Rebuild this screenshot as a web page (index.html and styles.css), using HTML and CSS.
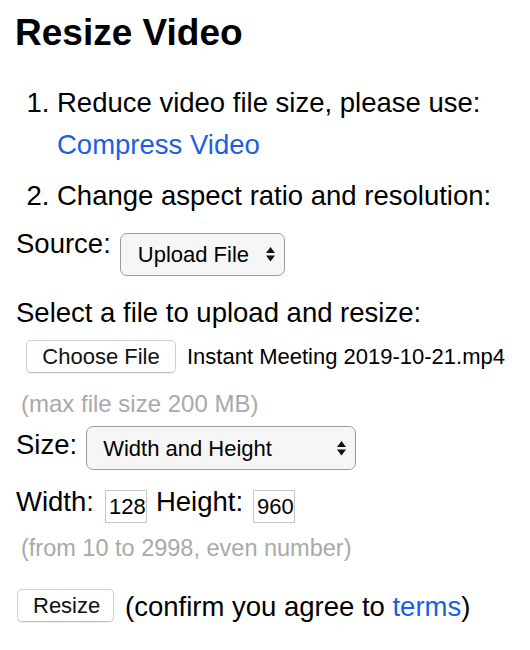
FILE: index.html
```html
<!DOCTYPE html>
<html lang="en">
<head>
<meta charset="utf-8">
<title>Resize Video</title>
<link rel="stylesheet" href="styles.css">
</head>
<body>
<h1 class="title">Resize Video</h1>
<ol class="steps">
  <li class="step">Reduce video file size, please use:<br><a class="link" href="#">Compress Video</a></li>
  <li class="step step-two">Change aspect ratio and resolution:</li>
</ol>
<div class="row row-source">
  <span class="label label-source">Source:</span>
  <div class="select select-source">
    <span class="select-text">Upload File</span>
    <svg class="arrows" width="9" height="15" viewBox="0 0 9 15"><path d="M4.5 0 L9 6 L0 6 Z M0 8.5 L9 8.5 L4.5 14.5 Z" fill="#111"/></svg>
  </div>
</div>
<p class="line select-file">Select a file to upload and resize:</p>
<div class="row row-file">
  <button class="btn btn-choose" type="button">Choose File</button>
  <span class="filename">Instant Meeting 2019-10-21.mp4</span>
</div>
<p class="hint hint-max">(max file size 200 MB)</p>
<div class="row row-size">
  <span class="label label-size">Size:</span>
  <div class="select select-size">
    <span class="select-text">Width and Height</span>
    <svg class="arrows" width="9" height="15" viewBox="0 0 9 15"><path d="M4.5 0 L9 6 L0 6 Z M0 8.5 L9 8.5 L4.5 14.5 Z" fill="#111"/></svg>
  </div>
</div>
<div class="row row-dims">
  <span class="label">Width:</span>
  <input class="num num-w" type="text" value="1280">
  <span class="label label-h">Height:</span>
  <input class="num num-h" type="text" value="960">
</div>
<p class="hint hint-range">(from 10 to 2998, even number)</p>
<div class="row row-submit">
  <button class="btn btn-resize" type="button">Resize</button>
  <span class="confirm">(confirm you agree to <a class="link" href="#">terms</a>)</span>
</div>
</body>
</html>
```
FILE: styles.css
```css
html, body {
  margin: 0;
  background: #fff;
}
body {
  padding: 11px 0 0 16px;
  font-family: "Liberation Sans", Arial, Helvetica, sans-serif;
  font-size: 27.5px;
  line-height: 34px;
  color: #000;
}
.title {
  margin: 0 0 0 -1px;
  font-size: 37px;
  line-height: 44px;
  font-weight: bold;
}
.steps {
  margin: 26.5px 0 0 0;
  padding-left: 41px;
}
.step {
  line-height: 42px;
}
.step-two {
  margin-top: 9px;
}
.link {
  color: #1c5fe2;
  text-decoration: none;
}
.row {
  display: flex;
  align-items: flex-start;
}
.row-source {
  margin-top: 9px;
}
.label {
  white-space: nowrap;
}
.label-source {
  margin-top: 1px;
}
.select {
  display: flex;
  align-items: center;
  justify-content: space-between;
  box-sizing: border-box;
  border: 1.5px solid #9c9c9c;
  border-radius: 7px;
  background: #f6f6f6;
  font-size: 22px;
  line-height: 26px;
}
.select-source {
  margin: 7px 0 0 9px;
  width: 165px;
  height: 43px;
  padding: 0 9px 0 17px;
}
.select-size {
  margin: 0 0 0 9px;
  width: 270px;
  height: 44px;
  padding: 0 9px 0 16px;
}
.select-text {
  padding-top: 1px;
}
.arrows {
  display: block;
  flex: none;
}
.line {
  margin: 0;
}
.select-file {
  margin-top: 20.5px;
}
.row-file {
  margin-top: 9.5px;
}
.btn {
  box-sizing: border-box;
  height: 33px;
  margin: 0;
  padding: 0 15px;
  background: #fff;
  border: 1px solid #cfcfcf;
  border-bottom-color: #bdbdbd;
  border-radius: 5px;
  box-shadow: 0 1px 1px rgba(0, 0, 0, 0.06);
  font-family: "Liberation Sans", Arial, Helvetica, sans-serif;
  font-size: 22px;
  line-height: 31px;
  color: #111;
}
.btn-choose {
  margin-left: 10px;
  width: 150px;
}
.filename {
  margin-left: 11px;
  font-size: 22px;
  line-height: 33px;
  white-space: nowrap;
}
.hint {
  margin: 0 0 0 5px;
  color: #a9a9a9;
  line-height: 30px;
}
.hint-max {
  margin-top: 16.7px;
  font-size: 24px;
}
.row-size {
  margin-top: 7px;
}
.label-size {
  margin-top: 2px;
}
.row-dims {
  margin-top: 14.5px;
}
.num {
  box-sizing: border-box;
  width: 42px;
  height: 33px;
  margin: 5.5px 0 0 11px;
  padding: 0 0 0 3px;
  border: 1px solid #c6c6c6;
  border-radius: 0;
  background: #fff;
  font-family: "Liberation Sans", Arial, Helvetica, sans-serif;
  font-size: 22px;
  color: #000;
  outline: none;
}
.label-h {
  margin-left: 9px;
}
.num-h {
  margin-left: 10px;
}
.hint-range {
  margin-top: 9.6px;
  font-size: 23.5px;
}
.row-submit {
  margin-top: 26.4px;
}
.btn-resize {
  margin-left: 1px;
  width: 97px;
}
.confirm {
  margin: 0.5px 0 0 11px;
  white-space: nowrap;
}
```
